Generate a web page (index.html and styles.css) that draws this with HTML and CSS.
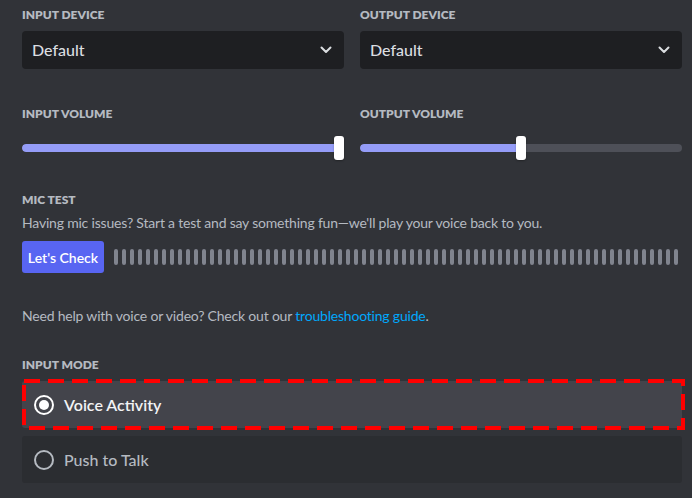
FILE: index.html
```html
<!DOCTYPE html>
<html lang="en">
<head>
<meta charset="utf-8">
<title>Voice Settings</title>
<link rel="stylesheet" href="styles.css">
</head>
<body>
<div class="page">
  <div class="cols">
    <div class="field">
      <div class="label">Input Device</div>
      <div class="select"><span>Default</span>
        <svg class="chev" width="12" height="8" viewBox="0 0 12 8"><path d="M1.5 1.5 L6 6 L10.5 1.5" fill="none" stroke="#dbdee1" stroke-width="2" stroke-linecap="round" stroke-linejoin="round"/></svg>
      </div>
    </div>
    <div class="field">
      <div class="label">Output Device</div>
      <div class="select"><span>Default</span>
        <svg class="chev" width="12" height="8" viewBox="0 0 12 8"><path d="M1.5 1.5 L6 6 L10.5 1.5" fill="none" stroke="#dbdee1" stroke-width="2" stroke-linecap="round" stroke-linejoin="round"/></svg>
      </div>
    </div>
  </div>

  <div class="cols vol">
    <div class="field">
      <div class="label">Input Volume</div>
      <div class="slider">
        <div class="track"><div class="fill" style="width: 100%"></div></div>
        <div class="knob" style="left: calc(100% - 10px)"></div>
      </div>
    </div>
    <div class="field">
      <div class="label">Output Volume</div>
      <div class="slider">
        <div class="track"><div class="fill" style="width: 50%"></div></div>
        <div class="knob" style="left: calc(50% - 5px)"></div>
      </div>
    </div>
  </div>

  <div class="mic">
    <div class="label">Mic Test</div>
    <p class="desc">Having mic issues? Start a test and say something fun—we'll play your voice back to you.</p>
    <div class="mic-row">
      <button class="btn">Let's Check</button>
      <div class="bars">
        <i></i><i></i><i></i><i></i><i></i><i></i><i></i><i></i><i></i><i></i>
        <i></i><i></i><i></i><i></i><i></i><i></i><i></i><i></i><i></i><i></i>
        <i></i><i></i><i></i><i></i><i></i><i></i><i></i><i></i><i></i><i></i>
        <i></i><i></i><i></i><i></i><i></i><i></i><i></i><i></i><i></i><i></i>
        <i></i><i></i><i></i><i></i><i></i><i></i><i></i><i></i><i></i><i></i>
        <i></i><i></i><i></i><i></i><i></i><i></i><i></i><i></i><i></i><i></i>
        <i></i><i></i><i></i><i></i><i></i><i></i><i></i><i></i><i></i><i></i>
        <i></i>
      </div>
    </div>
  </div>

  <p class="help">Need help with voice or video? Check out our <a class="link" href="#">troubleshooting guide</a>.</p>

  <div class="mode">
    <div class="label">Input Mode</div>
    <div class="radio selected">
      <svg class="rad" width="20" height="20" viewBox="0 0 20 20"><circle cx="10" cy="10" r="9" fill="none" stroke="#ffffff" stroke-width="2"/><circle cx="10" cy="10" r="5" fill="#ffffff"/></svg>
      <span>Voice Activity</span>
      <svg class="annot" width="663" height="51" viewBox="0 0 663 51"><rect x="2" y="2" width="659" height="47" fill="none" stroke="#ff0000" stroke-width="4" stroke-dasharray="16 8"/></svg>
    </div>
    <div class="radio">
      <svg class="rad" width="20" height="20" viewBox="0 0 20 20"><circle cx="10" cy="10" r="9" fill="none" stroke="#b5bac1" stroke-width="2"/></svg>
      <span>Push to Talk</span>
    </div>
  </div>
</div>
</body>
</html>
```

FILE: styles.css
```css
* { box-sizing: border-box; }
html, body { margin: 0; padding: 0; }
body {
  background: #313338;
  font-family: Lato, "Noto Sans", sans-serif;
  color: #dbdee1;
  width: 692px;
  height: 498px;
  overflow: hidden;
}
.page {
  padding: 7px 10px 0 22px;
}
.cols {
  display: grid;
  grid-template-columns: 1fr 1fr;
  column-gap: 16px;
}
.label {
  font-size: 12px;
  line-height: 16px;
  font-weight: 800;
  text-transform: uppercase;
  letter-spacing: 0;
  color: #b5bac1;
  margin-bottom: 8px;
}
.select {
  height: 38px;
  background: #1e1f22;
  border-radius: 4px;
  display: flex;
  align-items: center;
  justify-content: space-between;
  padding: 0 12px 2px 10px;
  font-size: 16px;
  font-weight: 500;
  color: #dbdee1;
}
.chev { display: block; margin-top: 2px; }
.vol { margin-top: 37px; }
.vol .label { margin-bottom: 14px; }
.slider {
  position: relative;
  height: 24px;
  display: flex;
  align-items: center;
}
.track {
  width: 100%;
  height: 8px;
  border-radius: 4px;
  background: #4e5058;
  overflow: hidden;
}
.fill {
  height: 100%;
  background: #949cf7;
  border-radius: 4px;
}
.knob {
  position: absolute;
  top: 0;
  width: 10px;
  height: 24px;
  border-radius: 3px;
  background: #ffffff;
  box-shadow: 0 1px 2px rgba(0,0,0,0.3);
}
.mic { margin-top: 32px; }
.mic .label { margin-bottom: 5px; }
.desc {
  margin: 0;
  font-size: 14px;
  line-height: 20px;
  letter-spacing: -0.2px;
  color: #b5bac1;
}
.mic-row {
  margin-top: 8px;
  display: flex;
  align-items: center;
  gap: 10px;
}
.btn {
  width: 82px;
  height: 32px;
  border: 0;
  border-radius: 3px;
  background: #5865f2;
  color: #ffffff;
  font-family: inherit;
  font-size: 14px;
  font-weight: 600;
  padding: 0;
}
.bars {
  display: flex;
  gap: 4px;
}
.bars i {
  display: block;
  width: 4px;
  height: 16px;
  border-radius: 2px;
  background: #80848e;
}
.help {
  margin: 33px 0 0;
  font-size: 14px;
  line-height: 20px;
  letter-spacing: -0.2px;
  color: #b5bac1;
}
.link { color: #00a8fc; text-decoration: none; }
.mode { margin-top: 31px; }
.radio {
  position: relative;
  height: 47px;
  display: flex;
  align-items: center;
  gap: 10px;
  padding-left: 12px;
  border-radius: 3px;
  background: #2b2d31;
  font-size: 16px;
  font-weight: 500;
  color: #b5bac1;
  margin-bottom: 8px;
}
.radio.selected {
  background: #43444b;
  color: #f2f3f5;
  font-weight: 600;
}
.rad { display: block; flex: none; }
.annot {
  position: absolute;
  left: 0;
  top: -2px;
  pointer-events: none;
}
```
